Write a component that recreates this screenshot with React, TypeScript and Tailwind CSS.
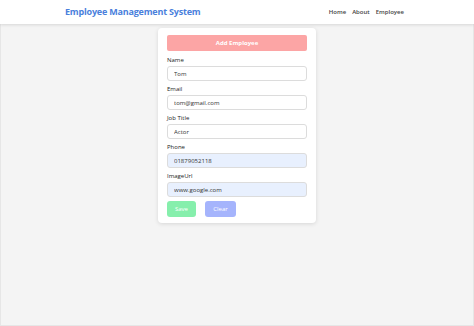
export default function App() {
  const fields = [
    { label: "Name", value: "Tom", filled: false },
    { label: "Email", value: "tom@gmail.com", filled: false },
    { label: "Job Title", value: "Actor", filled: false },
    { label: "Phone", value: "01879052118", filled: true },
    { label: "ImageUrl", value: "www.google.com", filled: true },
  ]

  return (
    <div className="w-[474px] h-[326px] bg-[#f4f4f4] font-['Open_Sans',sans-serif] overflow-hidden flex flex-col">
      <header className="h-6 shrink-0 bg-white shadow-[0_1px_3px_rgba(0,0,0,0.12)] flex items-center justify-between pl-[65px] pr-[70px] relative z-10">
        <h1 className="text-[9px] font-bold text-[#4a7fdc] tracking-[-0.2px]">
          Employee Management System
        </h1>
        <nav className="flex gap-[6px] text-[6px] font-semibold text-[#444]">
          <a href="#">Home</a>
          <a href="#">About</a>
          <a href="#">Employee</a>
        </nav>
      </header>

      <main className="flex-1 flex justify-center items-start pt-1 border-x border-b border-[#e6e6e6]">
        <form className="w-[158px] bg-white rounded-[4px] shadow-[0_1px_4px_rgba(0,0,0,0.12)] px-[9px] pt-[7px] pb-[6px] text-[6px] text-[#222]">
          <button
            type="button"
            className="w-full h-4 rounded-[2px] bg-[#fca5a5] text-white font-bold text-[6px]"
          >
            Add Employee
          </button>

          {fields.map((field, index) => (
            <div key={index} className={index === 0 ? "mt-[5px]" : "mt-1"}>
              <label className="block leading-[8px] mb-[2px]">{field.label}</label>
              <input
                readOnly
                value={field.value}
                className={`w-full h-[15px] rounded-[3px] border border-[#dcdcdc] px-[6px] text-[6px] text-[#333] outline-none ${field.filled ? "bg-[#e8f0fe]" : "bg-white"}`}
              />
            </div>
          ))}

          <div className="flex gap-[9px] mt-1">
            <button type="button" className="w-[29px] h-4 rounded-[3px] bg-[#86efac] text-white text-[6px]">
              Save
            </button>
            <button type="button" className="w-[31px] h-4 rounded-[3px] bg-[#a5b4fc] text-white text-[6px]">
              Clear
            </button>
          </div>
        </form>
      </main>
    </div>
  )
}
